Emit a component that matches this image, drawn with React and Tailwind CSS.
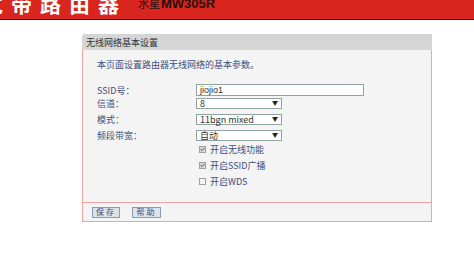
import { Check } from 'lucide-react';

const cjk = { fontFamily: '"Noto Sans CJK SC", "Liberation Sans", sans-serif' };

const Box = ({ children }) => (
    <div className="w-[86px] h-[11px] border border-[#8fa3a3] bg-white flex items-center justify-between px-[3px]">
        <span className="text-[9px] leading-none text-[#333]">{children}</span>
        <span className="text-[6px] leading-none text-[#222]">▼</span>
    </div>
);

const CheckRow = ({ checked, label, className }) => (
    <div className={`flex items-center h-[12px] pl-[116px] ${className}`}>
        <span className={`w-[7px] h-[7px] border border-[#a0a0a0] flex items-center justify-center ${checked ? 'bg-[#d8d8d8]' : 'bg-[#f4f4f4]'}`}>
            {checked && <Check size={7} strokeWidth={4} className="text-[#333]" />}
        </span>
        <span className="ml-[4px] text-[9px] leading-none text-[#3d4f7c]">{label}</span>
    </div>
);

const Row = ({ label, children, className }) => (
    <div className={`flex items-center h-[12px] ${className}`}>
        <span className="w-[113px] pl-[14px] text-[9px] leading-none text-[#3d4f7c]">{label}</span>
        {children}
    </div>
);

export default function App() {
    return (
        <div className="w-[474px] h-[270px] bg-white overflow-hidden" style={cjk}>
            {/* Header */}
            <div className="h-[20px] bg-[#d8261e] border-b border-[#3a1c1c] overflow-hidden flex items-start">
                <span className="ml-[-18px] mt-[-7px] text-[21px] leading-[21px] font-bold text-white tracking-[8px] whitespace-nowrap">
                    宽带路由器
                </span>
                <span className="ml-[11px] mt-[-2px] text-[11px] leading-[11px] text-[#2a1010]">水星</span>
                <span className="ml-[1px] mt-[-3px] text-[13px] leading-[14px] font-bold text-[#2a1010]" style={{ fontFamily: '"Liberation Sans", sans-serif' }}>
                    MW305R
                </span>
            </div>

            {/* Panel */}
            <div className="ml-[82px] mt-[14px] w-[350px]">
                <div className="h-[16px] bg-[#d5d5d5] rounded-tl-[3px] pl-[4px] flex items-center text-[9px] leading-none text-[#333]">
                    无线网络基本设置
                </div>
                <div className="border-x border-b border-[#f0a4a4] bg-[#f4f4f4]">
                    <div className="h-[152px]">
                        <div className="pt-[10px] pl-[14px] text-[9px] leading-[10px] text-[#3d4f7c]">
                            本页面设置路由器无线网络的基本参数。
                        </div>
                        <Row label="SSID号：" className="mt-[14px]">
                            <div className="w-[168px] h-[12px] border border-[#8fa3a3] bg-white flex items-center px-[3px]">
                                <span className="text-[9px] leading-none text-[#333]" style={{ fontFamily: '"Liberation Sans", sans-serif' }}>jiojio1</span>
                            </div>
                        </Row>
                        <Row label="信道：" className="mt-[1px]"><Box>8</Box></Row>
                        <Row label="模式：" className="mt-[4px]"><Box>11bgn mixed</Box></Row>
                        <Row label="频段带宽：" className="mt-[4px]"><Box>自动</Box></Row>
                        <CheckRow checked label="开启无线功能" className="mt-[2px]" />
                        <CheckRow checked label="开启SSID广播" className="mt-[4px]" />
                        <CheckRow label="开启WDS" className="mt-[4px]" />
                    </div>
                    <div className="h-[19px] border-t border-[#f0a4a4] flex items-center pl-[9px] gap-[12px]">
                        <button className="w-[28px] h-[11px] bg-[#dce3ea] border border-[#8c9cac] text-[8px] leading-none text-[#3d4f7c] tracking-[2px]">保存</button>
                        <button className="w-[29px] h-[11px] bg-[#dce3ea] border border-[#8c9cac] text-[8px] leading-none text-[#3d4f7c] tracking-[2px]">帮助</button>
                    </div>
                </div>
            </div>
        </div>
    );
}
